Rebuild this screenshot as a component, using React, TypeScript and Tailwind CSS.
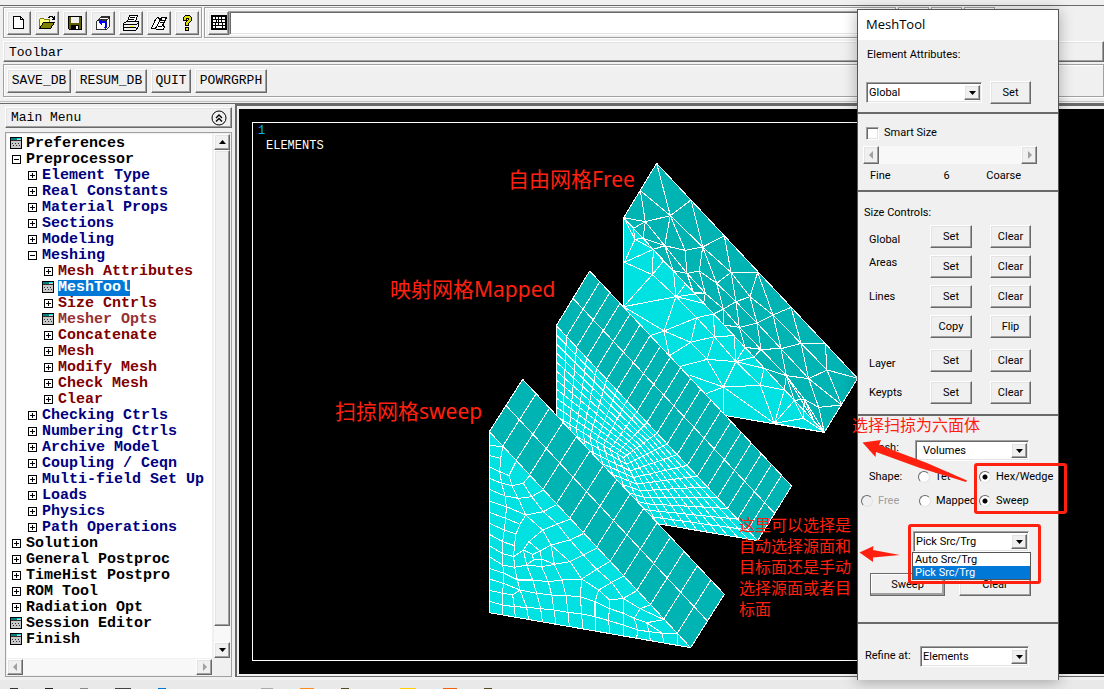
import type { ReactNode } from "react";

type Pt = [number, number];

const RAISED =
  "border border-t-white border-l-white border-r-[#696969] border-b-[#696969] shadow-[inset_-1px_-1px_#a0a0a0,inset_1px_1px_#e3e3e3] bg-[#f0f0f0]";
const SUNKEN =
  "border border-t-[#a0a0a0] border-l-[#a0a0a0] border-r-white border-b-white shadow-[inset_1px_1px_#696969,inset_-1px_-1px_#e3e3e3] bg-white";
const GROOVE = "border border-[#a0a0a0] shadow-[inset_1px_1px_#fff,1px_1px_#fff]";
const TRACK = "bg-[#f8f8f8]";

/* ---------- mesh geometry ---------- */

const lerp = (a: Pt, b: Pt, t: number): Pt => [a[0] + (b[0] - a[0]) * t, a[1] + (b[1] - a[1]) * t];
const seg = (a: Pt, b: Pt) => `M${a[0].toFixed(1)} ${a[1].toFixed(1)}L${b[0].toFixed(1)} ${b[1].toFixed(1)}`;

function grid(a: Pt, b: Pt, c: Pt, d: Pt, nu: number, nv: number) {
  let out = "";
  for (let i = 0; i <= nu; i++) out += seg(lerp(a, b, i / nu), lerp(d, c, i / nu));
  for (let j = 0; j <= nv; j++) out += seg(lerp(a, d, j / nv), lerp(b, c, j / nv));
  return out;
}

function mappedTriangle(a: Pt, b: Pt, c: Pt, n: number) {
  const g: Pt = [(a[0] + b[0] + c[0]) / 3, (a[1] + b[1] + c[1]) / 3];
  const ab = lerp(a, b, 0.5);
  const bc = lerp(b, c, 0.5);
  const ca = lerp(c, a, 0.5);
  return grid(a, ab, g, ca, n, n) + grid(b, bc, g, ab, n, n) + grid(c, ca, g, bc, n, n);
}

const FREE_LINES = [
  "121,122 211,197 170,40", "121,122 136,215 71,203", "273,150 211,197 136,215 194,287 211,197 308,291 273,150",
  "136,215 129,265 194,287 255,301 308,291 373,257 393,367 473,367", "136,215 100,235", "308,291 393,367 350,400 408,455",
  "211,197 255,301 261,370 194,287 160,298", "194,287 220,362", "308,291 298,363 261,370 220,362", "298,363 350,400 370,477 408,455",
  "255,301 261,370 316,430 298,363", "308,291 350,400", "261,370 280,427 316,430 370,477 341,492", "316,430 311,460",
  "393,367 408,455 450,440 473,367 519,495 573,472", "393,367 450,440 519,495 471,519 408,455 418,532 370,477 372,525 418,532 471,519 450,440",
  "418,532 483,598 471,519 543,596 519,495 603,580 573,472", "418,532 435,592 483,598 543,596 603,580 676,580 681,660 773,685",
  "483,598 559,677 543,596 626,686 603,580 681,660 626,686 559,677", "681,660 725,765 626,686 656,772 725,765", "559,677 613,748 656,772 673,847 613,748 643,815",
  "559,677 583,751 613,748", "559,677 492,655", "559,677 553,720", "559,677 643,815", "372,525 402,557", "435,592 462,621 483,598",
  "71,203 105,268 129,265", "100,235 105,268 73,337 160,298 105,268", "160,298 157,374 73,337", "160,298 190,333 157,374 228,440 220,362 190,333",
  "157,374 71,470 228,440 257,402", "228,440 316,428", "228,440 311,460", "228,440 290,503 341,492 343,560 290,503 192,543 228,440",
  "192,543 71,470", "192,543 150,557", "192,543 208,617 272,577 192,543", "290,503 272,577 343,560 402,557 408,635 343,560 321,628 272,577",
  "408,635 435,592", "408,635 462,621", "408,635 321,628 238,650", "321,628 370,711 408,635 492,655 481,706 408,635",
  "481,706 553,720", "481,706 370,711 270,676", "370,711 318,731", "370,711 372,797", "370,711 523,820 481,706", "553,720 523,820 583,751 610,805 523,820 673,847 610,805 613,748",
  "553,720 583,751", "71,203 673,847", "100,235 71,203",
];

const SWEEP_LINES = [
  "68,231 62,265 59,305 65,340 75,378 79,410 77,445 73,480 68,515 66,550 68,585 72,610 70,640 68,670 67,705 68,735",
  "28,225 68,231", "28,257 62,265", "28,290 59,305 87,317 107,277", "87,317 96,347", "28,325 65,340 96,347 130,340 148,318",
  "28,358 75,378 115,385 155,380 188,361", "28,393 79,410 137,435 190,425 229,404", "96,347 115,385 137,435 120,463 108,492 103,527 101,560 104,592 112,630 120,660",
  "28,427 77,445 120,463", "28,460 73,480 108,492", "28,493 68,515 103,527", "28,527 66,550 101,560 130,540", "28,560 68,585 104,592 140,585 185,590 223,583",
  "28,595 72,610 112,630 158,630 205,635 246,630 305,627", "28,627 70,640 120,660 170,670 215,675 258,677 301,680 345,695 386,715 430,730 463,745",
  "28,661 68,670 98,675 120,660 140,712", "28,694 67,705 103,710 140,712 182,716 222,720 264,727 305,732 345,740 386,752 430,765 473,780 507,785 547,790 592,792",
  "98,675 103,710 106,742", "140,712 146,749", "187,755 182,716 170,670 158,630 140,585 130,540 147,515 188,480 232,462 269,448",
  "228,762 222,720 215,675 205,635 185,590 185,567", "268,769 264,727 258,677 246,630 223,583 185,567 160,570 158,553 130,540",
  "308,776 305,732 301,680 305,627 270,575 223,583 213,525", "348,783 345,740 345,695 356,660 305,627 350,598 390,574",
  "389,790 386,752 389,690 356,660 395,637 431,618", "430,797 430,765 430,685 389,690", "430,685 472,661", "430,685 480,716",
  "470,805 473,780 463,745 480,716 512,704", "480,716 552,749", "463,745 500,758 552,749", "511,812 507,785 500,758 547,790 551,818", "592,826 592,792",
  "137,435 188,480 213,525 270,575 310,555 350,534", "310,491 270,510 213,525 180,543 158,553", "180,543 185,567", "147,515 180,543",
  "155,380 190,425 232,462 270,510 310,555 350,598 395,637 430,685", "130,340 155,380", "140,585 160,570",
];

const polylines = (lines: string[]) => lines.map((l) => "M" + l.split(" ").join("L")).join("");

const MAPPED_TOP = grid([134, 18], [740, 663], [638, 827], [34, 182], 20, 2);
const MAPPED_SIDE = mappedTriangle([34, 182], [34, 725], [638, 827], 10);
const SWEEP_TOP = grid([128, 28], [733, 673], [632, 833], [28, 185], 15, 2);

function Block({ at, top, side, lines }: { at: Pt; top: string; side: string; lines: string }) {
  return (
    <g transform={`translate(${at[0]} ${at[1]}) scale(0.33333)`} stroke="#fff" strokeWidth="3.100" strokeLinejoin="bevel">
      <polygon points={side} fill="#00e1e1" />
      <polygon points={top} fill="#00b4b4" />
      <path d={lines} fill="none" />
    </g>
  );
}

function MeshDrawing() {
  return (
    <svg className="absolute left-0 top-0" width="620" height="564" viewBox="239 109 620 564" role="img" aria-label="Meshed volumes" shapeRendering="crispEdges">
      <Block at={[600, 150]} top="170,40 773,685 673,847 71,203" side="71,203 71,745 673,847" lines={polylines(FREE_LINES)} />
      <Block at={[545, 265]} top="134,18 740,663 638,827 34,182" side="34,182 34,725 638,827" lines={MAPPED_TOP + MAPPED_SIDE} />
      <Block at={[480, 370]} top="128,28 733,673 632,833 28,185" side="28,185 28,728 632,833" lines={SWEEP_TOP + polylines(SWEEP_LINES)} />
    </svg>
  );
}

/* ---------- icons ---------- */

const TOOL_ICONS: { label: string; art: ReactNode }[] = [
  { label: "New", art: <path d="M3.500 2.500h7l3 3v9h-10zM10.500 2.500v3h3" fill="#fff" stroke="#000" /> },
  {
    label: "Open",
    art: (
      <>
        <path d="M1.500 14.500v-9l1-1h3l1 1h5v3" fill="#ffff80" stroke="#808000" />
        <path d="M1.500 14.500l4-6h11l-4 6z" fill="#808000" stroke="#000" />
        <path d="M10 3.500h1v-1h3v1h1v1h1M16.500 2v3.500h-3" fill="none" stroke="#000" />
      </>
    ),
  },
  {
    label: "Save",
    art: (
      <>
        <path d="M2.500 2.500h13v13h-12l-1-1z" fill="#5f5f00" stroke="#000" />
        <path d="M5 3h8v6H5z" fill="#f0f0f0" />
        <path d="M5 11h8v4H5z" />
        <path d="M10 12h2v3h-2z" fill="#fff" />
      </>
    ),
  },
  {
    label: "Restore",
    art: (
      <>
        <path d="M2.500 6.500l4-4h9v9l-4 4h-9zM2.500 6.500h9v9M11.500 6.500l4-4M4.500 5.500h8v8M6.500 3.500h8" fill="#fff" stroke="#000" strokeWidth="0.800" />
        <path d="M4 8l4-3v2h3l2 2v3l-2 2H9l2-2V9H8v2z" fill="#0000ff" />
      </>
    ),
  },
  {
    label: "Print",
    art: (
      <>
        <path d="M5.500 7.500l2-6h8l-2 6z" fill="#fff" stroke="#000" />
        <path d="M8 3.500h5M7 5.500h5" stroke="#000" />
        <path d="M1.500 9.500l3-2h12v5l-3 4h-12z" fill="#f0f0f0" stroke="#000" />
        <path d="M2 10.500h12M2 13.500h12M14.500 11l2-3" stroke="#000" fill="none" />
        <path d="M8 12h3v1H8z" fill="#ff0" />
      </>
    ),
  },
  {
    label: "Report",
    art: (
      <>
        <path d="M1.500 14.500l4-9 2-2 2 1v3l-4 7z" fill="#fff" stroke="#000" />
        <path d="M5.500 14.500l1 1h7l1-3-2-1 4-8h-5l-1 2-5 9zM8 12.500h4M11 5.500l1 1h3M10 8.500h3" fill="#fff" stroke="#000" />
      </>
    ),
  },
  {
    label: "Help",
    art: <path d="M5.500 6.500v-3l2-2h4l2 2v3l-3 3v2h-3v-3l3-3v-1h-2v2zM7.500 13.500h3v3h-3z" fill="#e0e000" stroke="#000" />,
  },
];

function Keyboard() {
  return (
    <svg width="16" height="16" viewBox="0 0 16 16" shapeRendering="crispEdges" aria-hidden="true">
      <path d="M0 0h16v15H0z" />
      <path d="M2 2h2v2H2zM5 2h2v2H5zM8 2h2v2H8zM11 2h3v2h-3zM2 5h3v2H2zM6 5h1v2H6zM8 5h2v2H8zM11 5h3v2h-3zM2 8h2v2H2zM5 8h2v2H5zM8 8h3v2H8zM12 8h2v2h-2zM2 11h2v2H2zM5 11h6v2H5zM12 11h2v2h-2z" fill="#fff" />
    </svg>
  );
}

function DialogIcon() {
  return (
    <svg width="12" height="12" viewBox="0 0 12 12" shapeRendering="crispEdges" aria-hidden="true">
      <path d="M0 0h12v12H0z" />
      <path d="M1 1h10v10H1z" fill="#c8c8c8" />
      <path d="M1 1h6v2H1z" fill="#008080" />
      <path d="M7 1h4v1H7z" fill="#00e0e0" />
      <path d="M1 3h10v1H1zM2 6h1v1H2zM5 6h1v1H5zM8 6h1v1H8zM3 8h1v1H3zM6 8h1v1H6zM9 8h1v1H9z" fill="#303030" />
    </svg>
  );
}

function BoxIcon({ open }: { open: boolean }) {
  return (
    <svg width="9" height="9" viewBox="0 0 9 9" shapeRendering="crispEdges" aria-hidden="true">
      <path d={open ? "M.5.5h8v8h-8zM2 4.500h5" : "M.5.5h8v8h-8zM2 4.500h5M4.500 2v5"} fill="#fff" stroke="#000" />
    </svg>
  );
}

function Tri({ dir, muted = false }: { dir: "up" | "down" | "left" | "right"; muted?: boolean }) {
  const d = { up: "M0 6h7L3.500 2z", down: "M0 2h7L3.500 6z", left: "M5 0v8L1 4z", right: "M2 0v8l4-4z" }[dir];
  return (
    <svg width="7" height="8" viewBox="0 0 7 8" aria-hidden="true">
      <path d={d} fill={muted ? "#a0a0a0" : "#000"} />
    </svg>
  );
}

function ScrollButton({ dir, muted, label }: { dir: "up" | "down" | "left" | "right"; muted?: boolean; label: string }) {
  return (
    <button aria-label={label} className={`flex size-4 shrink-0 items-center justify-center ${RAISED}`}>
      <Tri dir={dir} muted={muted} />
    </button>
  );
}

/* ---------- main menu tree ---------- */

type Kind = "dialog" | "open" | "closed";
const TREE: [number, Kind, string][] = [
  [0, "dialog", "Preferences"],
  [0, "open", "Preprocessor"],
  [1, "closed", "Element Type"],
  [1, "closed", "Real Constants"],
  [1, "closed", "Material Props"],
  [1, "closed", "Sections"],
  [1, "closed", "Modeling"],
  [1, "open", "Meshing"],
  [2, "closed", "Mesh Attributes"],
  [2, "dialog", "MeshTool"],
  [2, "closed", "Size Cntrls"],
  [2, "dialog", "Mesher Opts"],
  [2, "closed", "Concatenate"],
  [2, "closed", "Mesh"],
  [2, "closed", "Modify Mesh"],
  [2, "closed", "Check Mesh"],
  [2, "closed", "Clear"],
  [1, "closed", "Checking Ctrls"],
  [1, "closed", "Numbering Ctrls"],
  [1, "closed", "Archive Model"],
  [1, "closed", "Coupling / Ceqn"],
  [1, "closed", "Multi-field Set Up"],
  [1, "closed", "Loads"],
  [1, "closed", "Physics"],
  [1, "closed", "Path Operations"],
  [0, "closed", "Solution"],
  [0, "closed", "General Postproc"],
  [0, "closed", "TimeHist Postpro"],
  [0, "closed", "ROM Tool"],
  [0, "closed", "Radiation Opt"],
  [0, "dialog", "Session Editor"],
  [0, "dialog", "Finish"],
];
const INDENT = ["pl-[3px]", "pl-[19px]", "pl-[35px]"];
const LEVEL_COLOR = ["text-black", "text-[#000080]", "text-[#800000]"];

function TreeRow({ item: [level, kind, name] }: { item: [number, Kind, string] }) {
  const color =
    name === "MeshTool" ? "bg-[#0078d7] text-white" : name === "Mesher Opts" ? "text-[#973030]" : LEVEL_COLOR[level];
  return (
    <li className={`flex h-4 items-start ${INDENT[level]}`}>
      <span className="flex w-4 shrink-0 pt-px">
        {kind === "dialog" ? <DialogIcon /> : <span className="pl-0.5 pt-0.5"><BoxIcon open={kind === "open"} /></span>}
      </span>
      <span className={`h-4 whitespace-pre leading-4 ${color}`}>{name}</span>
    </li>
  );
}

function MainMenu() {
  return (
    <aside className="flex w-[232px] shrink-0 flex-col gap-1 pb-[3px] pl-[5px] pt-[3px]">
      <header className={`flex h-[21px] items-center justify-between pl-[5px] pr-1 ${RAISED}`}>
        <h2 className="font-['Liberation_Mono',monospace] text-[13px] leading-4">Main Menu</h2>
        <button aria-label="Collapse menu">
          <svg width="16" height="16" viewBox="0 0 16 16" fill="none" stroke="#000" aria-hidden="true">
            <circle cx="8" cy="8" r="7" />
            <path d="M5 8l3-3 3 3M5 11.500l3-3 3 3" strokeWidth="1.300" />
          </svg>
        </button>
      </header>
      <div className="flex flex-1 flex-col border border-[#a0a0a0] bg-[#f0f0f0] p-px">
        <div className="flex flex-1">
          <ul className="flex-1 bg-white pt-0.5 font-['Liberation_Mono',monospace] text-[15px] font-bold">
            {TREE.map((item) => (
              <TreeRow key={item[2]} item={item} />
            ))}
          </ul>
          <div className="w-0.5" />
          <div className={`flex w-4 flex-col ${TRACK}`}>
            <ScrollButton dir="up" label="Scroll up" />
            <div className={`flex-1 ${RAISED}`} />
            <div className="h-4" />
            <ScrollButton dir="down" label="Scroll down" />
          </div>
        </div>
        <div className="flex h-[17px] pr-[18px] pt-px">
          <ScrollButton dir="left" muted label="Scroll left" />
          <div className={`flex-1 ${TRACK}`} />
          <ScrollButton dir="right" muted label="Scroll right" />
        </div>
      </div>
    </aside>
  );
}

/* ---------- mesh tool window ---------- */

function PushButton({ children, className = "w-[41px]" }: { children: ReactNode; className?: string }) {
  return <button className={`h-[23px] leading-4 ${RAISED} ${className}`}>{children}</button>;
}

function Combo({ label, value, className, pad = "pl-px" }: { label: string; value: string; className: string; pad?: string }) {
  return (
    <div className={`flex h-[21px] px-px py-0.5 ${SUNKEN} ${className}`}>
      <select aria-label={label} defaultValue={value} className={`min-w-0 flex-1 appearance-none bg-transparent leading-4 outline-none ${pad}`}>
        <option>{value}</option>
      </select>
      <span className={`flex w-4 items-center justify-center ${RAISED}`}>
        <Tri dir="down" />
      </span>
    </div>
  );
}

function Radio({ name, label, checked, disabled }: { name: string; label: string; checked?: boolean; disabled?: boolean }) {
  return (
    <label className={`flex items-center gap-[5px] whitespace-nowrap ${disabled ? "text-[#a0a0a0]" : ""}`}>
      <input
        type="radio"
        name={name}
        defaultChecked={checked}
        disabled={disabled}
        className="size-3 shrink-0 appearance-none rounded-full border border-b-[#e3e3e3] border-l-[#696969] border-r-[#e3e3e3] border-t-[#696969] bg-white checked:bg-[radial-gradient(circle,#000_2px,#fff_3px)] disabled:bg-[#f0f0f0]"
      />
      {label}
    </label>
  );
}

const SIZE_ROWS: { label: string; align: string; gap: string; actions: [string, string] }[] = [
  { label: "Global", align: "self-end", gap: "mt-1", actions: ["Set", "Clear"] },
  { label: "Areas", align: "self-start", gap: "mt-[7px]", actions: ["Set", "Clear"] },
  { label: "Lines", align: "self-center", gap: "mt-[7px]", actions: ["Set", "Clear"] },
  { label: "", align: "", gap: "mt-[7px]", actions: ["Copy", "Flip"] },
  { label: "Layer", align: "self-end", gap: "mt-[11px]", actions: ["Set", "Clear"] },
  { label: "Keypts", align: "self-center", gap: "mt-[9px]", actions: ["Set", "Clear"] },
];

function MeshTool() {
  return (
    <section
      aria-label="MeshTool"
      className="absolute left-[857px] top-[9px] flex w-[202px] flex-col overflow-hidden border border-b-0 border-[#555] bg-[#f0f0f0] font-[Roboto,sans-serif] text-[11px] leading-4 shadow-[0_2px_14px_rgba(0,0,0,0.3)]"
    >
      <h2 className="bg-white pb-1.5 pl-2 pt-1 font-['Open_Sans',sans-serif] text-[13px] leading-5">MeshTool</h2>

      <div className="h-[74px] border-b-2 border-[#696969] pl-2 pt-[7px]">
        <p className="pl-px">Element Attributes:</p>
        <div className="mt-[18px] flex items-center gap-2">
          <Combo label="Element Attributes" value="Global" className="w-[116px]" />
          <PushButton>Set</PushButton>
        </div>
      </div>

      <div className="h-[78px] border-b-2 border-[#696969] pl-[5px] pt-[11px]">
        <label className="flex items-center gap-[5px] pl-[3px]">
          <input type="checkbox" className={`size-[13px] appearance-none ${SUNKEN}`} />
          Smart Size
        </label>
        <div className="mt-[5px] flex w-[174px]">
          <button aria-label="Finer" className={`flex h-[18px] w-4 items-center justify-center ${RAISED}`}>
            <Tri dir="left" muted />
          </button>
          <div className={`flex-1 ${TRACK}`} />
          <button aria-label="Coarser" className={`flex h-[18px] w-4 items-center justify-center ${RAISED}`}>
            <Tri dir="right" muted />
          </button>
        </div>
        <div className="mt-1 flex w-[158px] justify-between pl-[7px]">
          <span>Fine</span>
          <span className="pl-4">6</span>
          <span>Coarse</span>
        </div>
      </div>

      <div className="h-[224px] border-b-2 border-[#696969] pl-1.5 pt-[13px]">
        <p>Size Controls:</p>
        {SIZE_ROWS.map((row) => (
          <div key={row.label} className={`flex h-[23px] pl-[5px] ${row.gap}`}>
            <span className={`w-[61px] ${row.align}`}>{row.label}</span>
            <PushButton className="mr-[18px] w-[42px]">{row.actions[0]}</PushButton>
            <PushButton>{row.actions[1]}</PushButton>
          </div>
        ))}
      </div>

      <div className="h-[208px] border-b-2 border-[#696969] pt-6">
        <div className="flex pl-[11px]">
          <span className="w-[46px]">Mesh:</span>
          <Combo label="Mesh" value="Volumes" className="w-[114px]" pad="pl-1.5" />
        </div>
        <div className="mt-2 flex pl-[11px]">
          <span className="w-[49px]">Shape:</span>
          <div className="w-[61px]">
            <Radio name="shape" label="Tet" />
          </div>
          <Radio name="shape" label="Hex/Wedge" checked />
        </div>
        <div className="mt-2 flex pl-[3px]">
          <div className="w-[58px]">
            <Radio name="mesher" label="Free" disabled />
          </div>
          <div className="w-[60px]">
            <Radio name="mesher" label="Mapped" />
          </div>
          <Radio name="mesher-type" label="Sweep" checked />
        </div>
        <div className="relative mt-[22px] pl-[55px]">
          <Combo label="Source and target" value="Pick Src/Trg" className="w-[116px]" />
          <ul role="listbox" aria-label="Source and target options" className="absolute left-[54px] top-[21px] w-[119px] border border-[#555] bg-white leading-[13px]">
            <li role="option" aria-selected="false" className="pl-0.5">Auto Src/Trg</li>
            <li role="option" aria-selected="true" className="bg-[#0078d7] pl-0.5 text-white">Pick Src/Trg</li>
          </ul>
        </div>
        <div className="mt-[21px] flex gap-3.5 pl-3">
          <button className="h-[23px] w-[75px] border border-[#696969] leading-4 shadow-[inset_-2px_-2px_#a0a0a0,inset_1px_1px_#fff]">Sweep</button>
          <PushButton className="w-[72px]">Clear</PushButton>
        </div>
      </div>

      <div className="h-14 pl-[7px] pt-[22px]">
        <div className="flex">
          <span className="w-[55px] pt-0.5">Refine at:</span>
          <Combo label="Refine at" value="Elements" className="w-[109px]" />
        </div>
      </div>
    </section>
  );
}

/* ---------- annotations ---------- */

function Note({ className, children }: { className: string; children: ReactNode }) {
  return (
    <p className={`absolute whitespace-nowrap font-['Noto_Sans','Noto_Sans_CJK_SC',sans-serif] text-[#ff2010] ${className}`}>{children}</p>
  );
}

function Annotations() {
  return (
    <div className="pointer-events-none">
      <Note className="left-[508px] top-[164px] text-[21px] leading-[30px]">自由网格Free</Note>
      <Note className="left-[390px] top-[274px] text-[21px] leading-[30px]">映射网格Mapped</Note>
      <Note className="left-[335px] top-[396px] text-[21px] leading-[30px]">扫掠网格sweep</Note>
      <Note className="left-[852px] top-[415px] text-[16px] leading-[21px]">选择扫掠为六面体</Note>
      <Note className="left-[739px] top-[515px] text-[16px] leading-[21px]">
        这里可以选择是
        <br />
        自动选择源面和
        <br />
        目标面还是手动
        <br />
        选择源面或者目
        <br />
        标面
      </Note>
      <div className="absolute left-[974px] top-[463px] h-[51px] w-[93px] rounded-[3px] border-[3px] border-[#ff2010]" />
      <div className="absolute left-[908px] top-[524px] h-[60px] w-[133px] rounded-[3px] border-[3px] border-[#ff2010]" />
      <svg className="absolute left-[850px] top-[430px]" width="130" height="140" viewBox="850 430 130 140" fill="#ff2010" aria-hidden="true">
        <polygon points="862.500,442.500 881,440 879,445 927,463 967,480.500 966,482 920,468 876,452 875.500,457" />
        <polygon points="859.500,552.500 873.500,546 873,550 900,555 873,557.500 873,562" />
      </svg>
    </div>
  );
}

/* ---------- page ---------- */

export default function App() {
  return (
    <div className="relative flex min-h-screen flex-col overflow-hidden bg-[#f0f0f0] font-['Liberation_Mono',monospace] text-[13px] text-black">
      <div className="h-1.5 border-b border-[#696969]" />

      <div className="mt-px flex h-[31px] gap-0.5 pl-[3px]">
        <div className={`flex items-center gap-[5px] px-[3px] ${GROOVE}`}>
          {TOOL_ICONS.map((tool) => (
            <button key={tool.label} aria-label={tool.label} className={`-mr-px flex size-6 items-center justify-center ${RAISED}`}>
              <svg width="18" height="18" viewBox="0 0 18 18" shapeRendering="crispEdges" aria-hidden="true">
                {tool.art}
              </svg>
            </button>
          ))}
        </div>
        <div className={`flex w-[692px] items-center px-[3px] ${GROOVE}`}>
          <button aria-label="Command window" className={`flex h-6 w-[21px] shrink-0 items-center justify-center ${RAISED}`}>
            <Keyboard />
          </button>
          <input aria-label="Command" className={`h-6 min-w-0 flex-1 px-1 outline-none ${SUNKEN}`} />
        </div>
        <div className={`w-[31px] ${GROOVE}`} />
        <div className={`w-[31px] ${GROOVE}`} />
        <div className={`w-[31px] ${GROOVE}`} />
      </div>

      <h1 className={`ml-[3px] mt-[3px] h-[21px] pl-[5px] leading-[21px] ${RAISED}`}>Toolbar</h1>

      <div className={`ml-[3px] mt-0.5 flex h-[33px] items-center gap-1 pl-[3px] ${GROOVE}`}>
        {[
          ["SAVE_DB", "w-16"],
          ["RESUM_DB", "w-[72px]"],
          ["QUIT", "w-10"],
          ["POWRGRPH", "w-[72px]"],
        ].map(([name, width]) => (
          <button key={name} className={`h-6 whitespace-nowrap ${width} ${RAISED}`}>{name}</button>
        ))}
      </div>

      <div className="mt-1 h-[3px] border-b border-t border-b-[#696969] border-t-[#c0c0c0]" />

      <main className="flex flex-1">
        <MainMenu />
        <div className="mb-[3px] ml-[3px] flex flex-1 border-b border-l-2 border-t-2 border-[#696969] pb-0.5 pl-0.5 pt-[3px]">
          <div className="relative flex-1 bg-black">
            <div className="mr-[150px] h-full pb-[13px] pl-[13px] pt-[13px]">
              <div className="h-full border border-white pl-[5px] pt-px">
                <p className="text-[12px] leading-[15px] text-[#00b4ff]">1</p>
                <p className="pl-2 text-[12px] leading-[14px] text-white">ELEMENTS</p>
              </div>
            </div>
            <MeshDrawing />
          </div>
        </div>
      </main>

      <footer className="flex h-[9px] items-end gap-[27px] bg-[#e9e9e9] pl-[10px]" aria-hidden="true">
        <span className="h-px w-2 bg-[#333]" />
        <span className="h-px w-2 bg-[#222]" />
        <span className="h-px w-2 bg-[#888]" />
        <span className="h-px w-4 bg-[#444]" />
        <span className="h-px w-2 bg-[#0078d7]" />
        <span className="ml-[68px] h-px w-3 bg-[#aaa]" />
        <span className="h-px w-3.5 bg-[#ff8c1a]" />
        <span className="h-px w-2 bg-[#554a20]" />
        <span className="ml-6 h-px w-4 bg-[#ffd400]" />
        <span className="h-px w-3.5 bg-[#f06010]" />
        <span className="h-px w-2 bg-[#554a20]" />
      </footer>

      <MeshTool />
      <Annotations />
    </div>
  );
}
